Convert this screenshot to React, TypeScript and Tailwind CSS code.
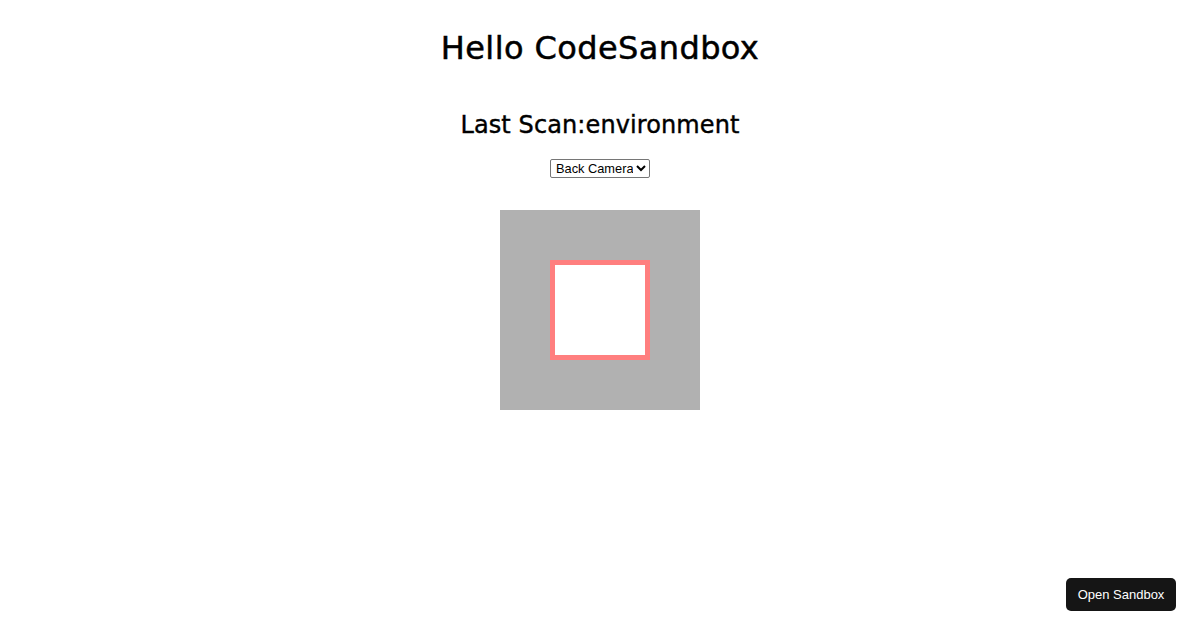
import { useState } from 'react';

const App = () => {
  const [camera, setCamera] = useState('environment');

  return (
    <div className="relative min-h-[630px] w-full bg-white text-center text-black">
      {/* 제목 */}
      <h1 className="pt-[29px] font-['DejaVu_Sans',sans-serif] text-[32px] leading-[39px] tracking-[0.4px] [-webkit-text-stroke:0.5px_black]">
        Hello CodeSandbox
      </h1>
      <h2 className="mt-[42px] font-['DejaVu_Sans',sans-serif] text-[24px] leading-[30px] tracking-[0.1px] [-webkit-text-stroke:0.4px_black]">
        Last Scan:{camera}
      </h2>

      {/* 카메라 선택 */}
      <div className="mt-[19px] flex justify-center">
        <select
          value={camera}
          onChange={(e) => setCamera(e.target.value)}
          className="h-[19px] w-[100px] rounded-[2px] border border-[#767676] bg-white pl-[1px] font-['Liberation_Sans',Arial,sans-serif] text-[12.8px] leading-[16px] text-black"
        >
          <option value="environment">Back Camera</option>
          <option value="user">Front Camera</option>
        </select>
      </div>

      {/* 스캐너 영역 */}
      <div className="mt-[32px] flex justify-center">
        <div className="flex h-[200px] w-[200px] items-center justify-center bg-[#b1b1b1]">
          <div className="h-[100px] w-[100px] border-[5px] border-[#ff7f7f] bg-white" />
        </div>
      </div>

      <button className="fixed right-[24px] bottom-[19px] h-[33px] w-[110px] rounded-[5px] bg-[#151515] font-['Liberation_Sans',Arial,sans-serif] text-[13px] text-white">
        Open Sandbox
      </button>
    </div>
  );
};

export default App;
